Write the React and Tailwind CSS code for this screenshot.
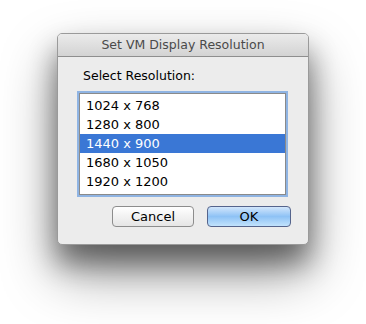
const sizes = ['1024 x 768', '1280 x 800', '1440 x 900', '1680 x 1050', '1920 x 1200']

export default function App() {
  return (
    <div className="w-[366px] h-[324px] bg-white pt-[33px] pl-[57px] font-['DejaVu_Sans',sans-serif]">
      <div className="w-[252px] h-[212px] rounded-[5px] bg-[#ececec] border border-[#9a9a9a] shadow-[0_18px_28px_rgba(0,0,0,0.45),0_28px_56px_rgba(0,0,0,0.4)] flex flex-col overflow-hidden">
        <div className="h-[23px] flex items-center justify-center bg-gradient-to-b from-[#ebebeb] to-[#d3d3d3] border-b border-[#8e8e8e] text-[12.5px] text-[#4a4a4a]">
          Set VM Display Resolution
        </div>
        <div className="flex flex-col px-[21px] pt-[11px]">
          <div className="pl-[4px] text-[12.5px] text-black leading-[16px]">Select Resolution:</div>
          <div className="mt-[9px] w-[207px] h-[102px] bg-white border border-[#8a8a8a] ring-[2px] ring-[#8fb4e3] pt-[2px]">
            {sizes.map((s) => (
              <div
                key={s}
                className={`h-[19px] pl-[6px] text-[13px] leading-[19px] ${s === '1440 x 900' ? 'bg-[#3a77d5] text-white' : 'text-black'}`}
              >
                {s}
              </div>
            ))}
          </div>
          <div className="flex justify-end gap-[13px] mt-[11px] -mr-[4px]">
            <button className="w-[82px] h-[21px] rounded-[4px] border border-[#8d8d8d] bg-gradient-to-b from-white to-[#e5e5e5] text-[13px] text-black leading-none">
              Cancel
            </button>
            <button className="w-[84px] h-[21px] rounded-[4px] border border-[#55648c] bg-gradient-to-b from-[#d2e6fb] via-[#8ec2f5] to-[#c2e3fc] text-[13px] text-black leading-none">
              OK
            </button>
          </div>
        </div>
      </div>
    </div>
  )
}
